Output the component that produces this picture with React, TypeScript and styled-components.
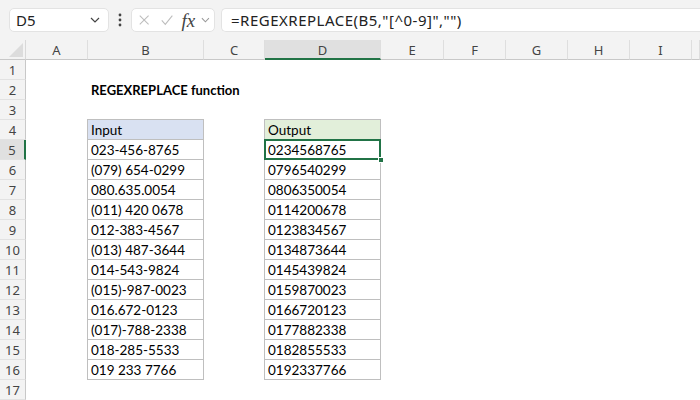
import React from "react";
import styled, { createGlobalStyle, css } from "styled-components";

const GlobalStyle = createGlobalStyle`
  html, body {
    margin: 0;
    padding: 0;
    background: #ffffff;
  }
`;

// ---- formula bar ----

const Toolbar = styled.div`
  height: 40px;
  background: #f3f3f3;
  display: flex;
  align-items: center;
  padding: 0 0 0 9px;
  box-sizing: border-box;
`;

const Box = styled.div`
  height: 24px;
  background: #ffffff;
  border: 1px solid #e3e3e3;
  border-radius: 5px;
  box-sizing: border-box;
  display: flex;
  align-items: center;
`;

const NameBox = styled(Box)`
  width: 100px;
  padding: 0 8px 0 6px;
  justify-content: space-between;
  font-family: "Noto Sans", "Open Sans", sans-serif;
  font-size: 15px;
  color: #222;
`;

const Dots = styled.div`
  width: 22px;
  display: flex;
  justify-content: center;
`;

const FxBox = styled(Box)`
  width: 84px;
  padding: 0 4px 0 6px;
  gap: 6px;
`;

const FormulaInput = styled(Box)`
  flex: 1;
  margin-left: 6px;
  border-right: none;
  border-radius: 5px 0 0 5px;
  padding-left: 9px;
  font-family: "Noto Sans", "Open Sans", sans-serif;
  font-size: 15px;
  letter-spacing: 0.5px;
  color: #222;
  white-space: pre;
`;

const FxText = styled.span`
  font-family: "Liberation Serif", serif;
  font-style: italic;
  font-size: 19px;
  color: #444;
  margin-left: 1px;
  line-height: 1;
`;

const Chevron = ({ color = "#444" }: { color?: string }) => (
  <svg width="10" height="6" viewBox="0 0 10 6">
    <path d="M1 1l4 4 4-4" fill="none" stroke={color} strokeWidth="1.2" />
  </svg>
);

// ---- sheet ----

const Sheet = styled.div`
  display: grid;
  grid-template-columns: 26px 62px 116px 61px 116px 63px 62px 62px 62px 62px 1fr;
  grid-auto-rows: 20px;
  font-family: "Lato", "Liberation Sans", sans-serif;
  font-size: 13.5px;
  color: #000;
  background: #ffffff;
`;

const Corner = styled.div`
  background: #f3f3f3;
  border-bottom: 1px solid #c8c8c8;
  border-right: 1px solid #d8d8d8;
  position: relative;
  overflow: hidden;
  box-sizing: border-box;
  &::after {
    content: "";
    position: absolute;
    right: 2px;
    bottom: 2px;
    border-style: solid;
    border-width: 0 0 14px 14px;
    border-color: transparent transparent #dcdcdc transparent;
  }
`;

const ColHead = styled.div<{ $active?: boolean }>`
  background: ${({ $active }) => ($active ? "#e0e0e0" : "#f3f3f3")};
  border-right: 1px solid #dedede;
  border-bottom: ${({ $active }) =>
    $active ? "2px solid #217346" : "1px solid #c8c8c8"};
  box-sizing: border-box;
  display: flex;
  align-items: center;
  justify-content: center;
  font-family: "Noto Sans", "Open Sans", sans-serif;
  font-size: 13px;
  color: #444;
  padding-top: 1px;
`;

const RowHead = styled.div<{ $active?: boolean }>`
  background: ${({ $active }) => ($active ? "#e0e0e0" : "#f3f3f3")};
  border-right: ${({ $active }) =>
    $active ? "2px solid #217346" : "1px solid #c8c8c8"};
  border-bottom: 1px solid #e2e2e2;
  box-sizing: border-box;
  display: flex;
  align-items: center;
  justify-content: center;
  font-family: "Noto Sans", "Open Sans", sans-serif;
  font-size: 13px;
  color: #444;
  padding-top: 1px;
`;

type Fill = "blue" | "green" | undefined;

const Cell = styled.div<{
  $bordered?: boolean;
  $fill?: Fill;
  $bold?: boolean;
  $active?: boolean;
}>`
  box-sizing: border-box;
  padding: 1px 0 0 3px;
  line-height: 19px;
  white-space: nowrap;
  position: relative;
  font-weight: ${({ $bold }) => ($bold ? 700 : 400)};
  font-size: ${({ $bold }) => ($bold ? "13px" : "13.5px")};
  background: ${({ $fill }) =>
    $fill === "blue" ? "#d9e1f2" : $fill === "green" ? "#e2efda" : "transparent"};
  ${({ $bordered }) =>
    $bordered &&
    css`
      border: 1px solid #bfbfbf;
      margin: -1px 0 0 -1px;
    `}
  ${({ $active }) =>
    $active &&
    css`
      &::after {
        content: "";
        position: absolute;
        left: -1px;
        top: -1px;
        right: -1px;
        bottom: -1px;
        border: 2px solid #217346;
        z-index: 2;
      }
      &::before {
        content: "";
        position: absolute;
        right: -4px;
        bottom: -4px;
        width: 6px;
        height: 6px;
        background: #217346;
        border: 1px solid #fff;
        box-sizing: border-box;
        z-index: 3;
      }
    `}
`;

const columns = ["A", "B", "C", "D", "E", "F", "G", "H", "I", ""];

const inputs = [
  "023-456-8765",
  "(079) 654-0299",
  "080.635.0054",
  "(011) 420 0678",
  "012-383-4567",
  "(013) 487-3644",
  "014-543-9824",
  "(015)-987-0023",
  "016.672-0123",
  "(017)-788-2338",
  "018-285-5533",
  "019 233 7766",
];

type CellData = {
  text?: string;
  bordered?: boolean;
  fill?: Fill;
  bold?: boolean;
  active?: boolean;
};

const getCell = (row: number, col: number): CellData => {
  // col: 0 = A, 1 = B, ...
  if (row === 2 && col === 1) return { text: "REGEXREPLACE function", bold: true };
  if (row === 4 && col === 1) return { text: "Input", bordered: true, fill: "blue" };
  if (row === 4 && col === 3) return { text: "Output", bordered: true, fill: "green" };
  if (row >= 5 && row <= 16) {
    const value = inputs[row - 5];
    if (col === 1) return { text: value, bordered: true };
    if (col === 3)
      return {
        text: value.replace(/[^0-9]/g, ""),
        bordered: true,
        active: row === 5,
      };
  }
  return {};
};

// one spare row below the window edge
const rows = Array.from({ length: 18 }, (_, i) => i + 1);

const App = () => {
  return (
    <>
      <GlobalStyle />
      <Toolbar>
        <NameBox>
          <span>D5</span>
          <Chevron />
        </NameBox>
        <Dots>
          <svg width="4" height="14" viewBox="0 0 4 14">
            <circle cx="2" cy="2" r="1.4" fill="#444" />
            <circle cx="2" cy="7" r="1.4" fill="#444" />
            <circle cx="2" cy="12" r="1.4" fill="#444" />
          </svg>
        </Dots>
        <FxBox>
          <svg width="14" height="14" viewBox="0 0 14 14">
            <path d="M2 2l10 10M12 2L2 12" stroke="#bdbdbd" strokeWidth="1.2" fill="none" />
          </svg>
          <svg width="16" height="14" viewBox="0 0 16 14" style={{ marginLeft: 4 }}>
            <path d="M2 7.5l4 4.5L14 2" stroke="#bdbdbd" strokeWidth="1.2" fill="none" />
          </svg>
          <FxText>fx</FxText>
          <Chevron color="#999" />
        </FxBox>
        <FormulaInput>=REGEXREPLACE(B5,"[^0-9]","")</FormulaInput>
      </Toolbar>
      <Sheet>
        <Corner />
        {columns.map((c, i) => (
          <ColHead key={i} $active={c === "D"}>
            {c}
          </ColHead>
        ))}
        {rows.map((r) => (
          <React.Fragment key={r}>
            <RowHead $active={r === 5}>{r}</RowHead>
            {columns.map((_, ci) => {
              const d = getCell(r, ci);
              return (
                <Cell
                  key={ci}
                  $bordered={d.bordered}
                  $fill={d.fill}
                  $bold={d.bold}
                  $active={d.active}
                >
                  {d.text}
                </Cell>
              );
            })}
          </React.Fragment>
        ))}
      </Sheet>
    </>
  );
};

export default App;
